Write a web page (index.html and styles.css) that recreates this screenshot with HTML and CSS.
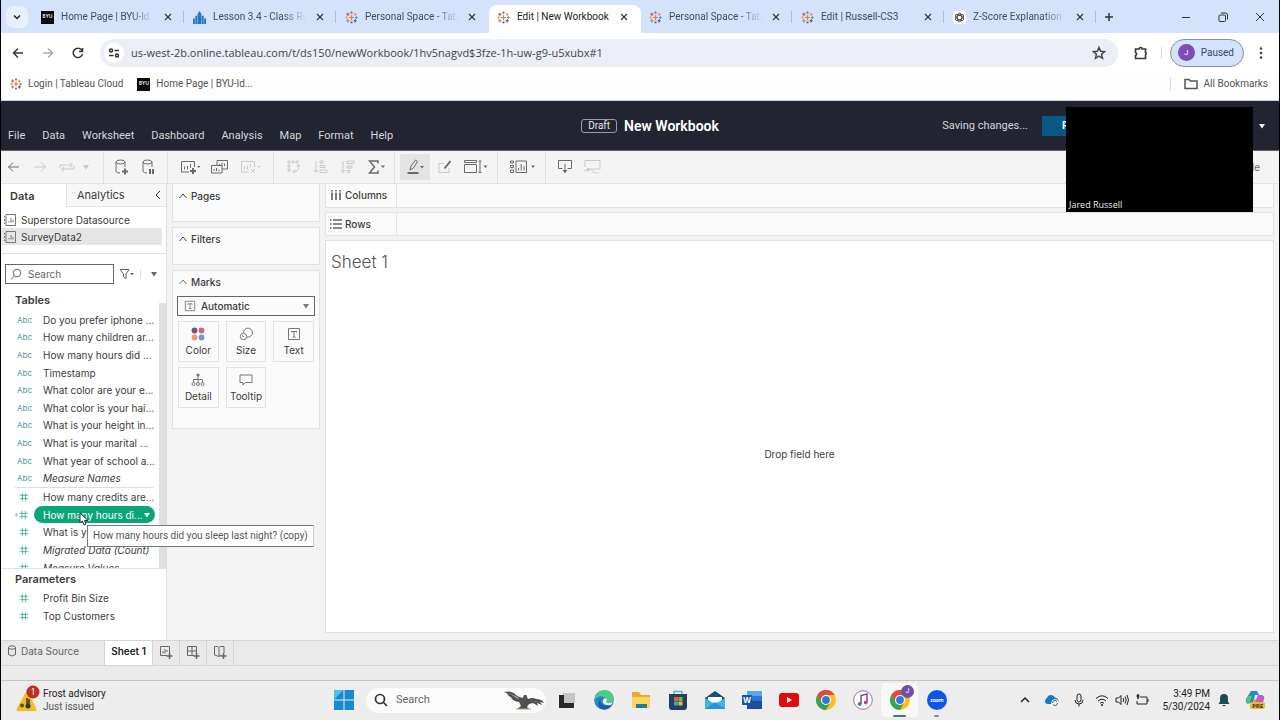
FILE: index.html
```html
<!DOCTYPE html>
<html lang="en">
<head>
<meta charset="utf-8">
<meta name="viewport" content="width=device-width, initial-scale=1">
<title>Edit | New Workbook</title>
<link rel="stylesheet" href="styles.css">
</head>
<body>
<svg class="defs" aria-hidden="true">
  <symbol id="tableau" viewBox="0 0 16 16"><g fill="none" stroke-width="1.500"><path stroke="#e8762d" d="M8 5v6M5 8h6"/><path stroke="#5b879b" d="M8 .5v3M6.500 2h3M14 6.500v3M12.500 8h3"/><path stroke="#c9575f" d="M3.500 2v4M1.500 4h4M8 12.500v3M6.500 14h3"/><path stroke="#e9a04a" d="M12.500 2v4M10.500 4h4M2 6.500v3M.5 8h3"/><path stroke="#4a5f80" d="M12.500 10v4M10.500 12h4"/><path stroke="#7199a6" d="M3.500 10v4M1.500 12h4"/></g></symbol>
  <symbol id="close" viewBox="0 0 16 16"><path d="m4 4 8 8m0-8-8 8"/></symbol>
  <symbol id="hash" viewBox="0 0 12 12"><path d="M4 1v10M8 1v10M1 4h10M1 8h10"/></symbol>
  <symbol id="up" viewBox="0 0 10 10"><path d="m1.500 7 3.500-4 3.500 4"/></symbol>
  <symbol id="caret" viewBox="0 0 8 8"><path d="M1 2h6L4 6.500z"/></symbol>
  <symbol id="source" viewBox="0 0 14 14"><path d="M3 1.500h9.500v11H3zM1.500 3v1.500M1.500 6v2M1.500 9.500V11M6 9.500V8M8 9.500V5M10 9.500V7"/></symbol>
  <symbol id="texticon" viewBox="0 0 14 14"><path d="M1.500 1.500h11v11h-11zM4.500 5.500v-1h5v1M7 4.500v5.500M5.500 10h3"/></symbol>
  <symbol id="chrome" viewBox="0 0 20 20"><circle cx="10" cy="10" r="10" fill="#fbc116"/><path fill="#df4a3c" d="M10 0A10 10 0 0 0 1.340 5l4.330 7.500L10 5h8.660A10 10 0 0 0 10 0z"/><path fill="#35a255" d="M1.340 5A10 10 0 0 0 10 20l4.330-7.500H5.670z"/><circle cx="10" cy="10" r="5" fill="#fff"/><circle cx="10" cy="10" r="3.900" fill="#3478dc"/></symbol>
</svg>

<header class="browser">
  <div class="tabstrip">
    <button class="tab-search" aria-label="Search tabs"><svg class="ln bold i10" viewBox="0 0 10 10"><path d="m2 3.500 3 3 3-3"/></svg></button>
    <nav class="tabs" aria-label="Browser tabs">
      <div class="tab"><span class="byu">BYU</span><a class="tab-title fade" href="#">Home Page | BYU-Id</a><button class="x" aria-label="Close tab"><svg class="ln bold"><use href="#close"/></svg></button></div>
      <div class="tab"><svg class="fav" viewBox="0 0 14 14"><path fill="#2476bd" d="M0 8h2v6H0zM2.500 5h2v9h-2zM5 3l2-3 2 3v11H5zM9.500 5h2v9h-2zM12 8h2v6h-2z"/></svg><a class="tab-title fade" href="#">Lesson 3.4 - Class Re</a><button class="x" aria-label="Close tab"><svg class="ln bold"><use href="#close"/></svg></button></div>
      <div class="tab before-active"><svg class="fav"><use href="#tableau"/></svg><a class="tab-title fade" href="#">Personal Space - Tab</a><button class="x" aria-label="Close tab"><svg class="ln bold"><use href="#close"/></svg></button></div>
      <div class="tab active"><svg class="fav"><use href="#tableau"/></svg><a class="tab-title" href="#">Edit | New Workbook</a><button class="x" aria-label="Close tab"><svg class="ln bold"><use href="#close"/></svg></button></div>
      <div class="tab"><svg class="fav"><use href="#tableau"/></svg><a class="tab-title fade" href="#">Personal Space - Tab</a><button class="x" aria-label="Close tab"><svg class="ln bold"><use href="#close"/></svg></button></div>
      <div class="tab"><svg class="fav"><use href="#tableau"/></svg><a class="tab-title" href="#">Edit | Russell-CS3</a><button class="x" aria-label="Close tab"><svg class="ln bold"><use href="#close"/></svg></button></div>
      <div class="tab"><svg class="fav gpt" viewBox="0 0 14 14"><g fill="none" stroke="#444"><ellipse cx="7" cy="7" rx="2.300" ry="4.800"/><ellipse cx="7" cy="7" rx="2.300" ry="4.800" transform="rotate(60 7 7)"/><ellipse cx="7" cy="7" rx="2.300" ry="4.800" transform="rotate(120 7 7)"/></g></svg><a class="tab-title fade" href="#">Z-Score Explanation</a><button class="x" aria-label="Close tab"><svg class="ln bold"><use href="#close"/></svg></button></div>
    </nav>
    <button class="new-tab" aria-label="New tab"><svg class="ln bold i10" viewBox="0 0 10 10"><path d="M5 1v8M1 5h8"/></svg></button>
    <div class="window-buttons">
      <button aria-label="Minimize"><svg class="ln i10" viewBox="0 0 10 10"><path d="M1 5.500h8"/></svg></button>
      <button aria-label="Restore"><svg class="ln i10" viewBox="0 0 10 10"><rect x="1" y="3" width="6.500" height="6.500" rx="1"/><path d="M3 1h4.500a2 2 0 0 1 2 2v4.500"/></svg></button>
      <button aria-label="Close window"><svg class="ln i10" viewBox="0 0 10 10"><path d="m1 1 8 8m0-8-8 8"/></svg></button>
    </div>
  </div>
  <div class="addressbar">
    <button class="nav-button" aria-label="Back"><svg class="ln bold i12" viewBox="0 0 12 12"><path d="M11 6H2M6 1.500 1.500 6 6 10.500"/></svg></button>
    <button class="nav-button faint" aria-label="Forward"><svg class="ln bold i12" viewBox="0 0 12 12"><path d="M1 6h9M6 1.500 10.500 6 6 10.500"/></svg></button>
    <button class="nav-button" aria-label="Reload"><svg class="ln bold i12" viewBox="0 0 12 12"><path d="M10.500 7A4.700 4.700 0 1 1 9.500 2.800L10.500 4M10.500 1v3.500H7"/></svg></button>
    <div class="omnibox">
      <button class="site-info" aria-label="Site information"><svg class="ln bold i12" viewBox="0 0 12 12"><circle cx="3" cy="3.500" r="1.500"/><path d="M6.500 3.500H11M1 8.500h4.500"/><circle cx="9" cy="8.500" r="1.500"/></svg></button>
      <input class="url" aria-label="Address" value="us-west-2b.online.tableau.com/t/ds150/newWorkbook/1hv5nagvd$3fze-1h-uw-g9-u5xubx#1">
      <button class="star" aria-label="Bookmark this page"><svg class="ln bold i14" viewBox="0 0 14 14"><path d="m7 1.500 1.600 3.700 4 .4-3 2.700.9 4L7 10.200l-3.500 2.100.9-4-3-2.700 4-.4z"/></svg></button>
    </div>
    <button class="nav-button" aria-label="Extensions"><svg class="ln heavy i14" viewBox="0 0 14 14"><path d="M1.500 3h3.700a1.500 1.500 0 0 1 3 0h3.300v3.500a1.500 1.500 0 0 1 0 2.500v3.500h-10V9.500a1.600 1.600 0 0 0 0-3z"/></svg></button>
    <span class="divider"></span>
    <button class="profile"><span class="avatar">J</span>Paused</button>
    <button class="dots" aria-label="Browser menu"><svg class="i14" viewBox="0 0 14 14"><circle cx="7" cy="2.500" r="1.300"/><circle cx="7" cy="7" r="1.300"/><circle cx="7" cy="11.500" r="1.300"/></svg></button>
  </div>
  <nav class="bookmarks" aria-label="Bookmarks">
    <a href="#"><svg class="i12"><use href="#tableau"/></svg>Login | Tableau Cloud</a>
    <a href="#"><span class="byu">BYU</span>Home Page | BYU-Id...</a>
    <a href="#" class="all-bookmarks"><svg class="ln bold i14" viewBox="0 0 14 14"><path d="M1 11.500V2.500h4l1.500 1.500H13v7.500z"/></svg>All Bookmarks</a>
  </nav>
</header>

<main class="app">
  <header class="app-header">
    <nav class="menus" aria-label="Workbook menu">
      <button>File</button><button>Data</button><button>Worksheet</button><button>Dashboard</button><button>Analysis</button><button>Map</button><button>Format</button><button>Help</button>
    </nav>
    <div class="workbook"><span class="draft">Draft</span><h1>New Workbook</h1></div>
    <div class="publish-area"><span>Saving changes...</span><button class="publish">Publish</button><button class="user-menu" aria-label="Account menu"><svg class="solid i8"><use href="#caret"/></svg></button></div>
  </header>

  <div class="toolbar" role="toolbar" aria-label="Workbook tools">
    <div class="group history">
      <button aria-label="Undo"><svg class="ln" viewBox="0 0 16 16"><path d="M13 8H2.500M7 3.500 2.500 8 7 12.500"/></svg></button>
      <button class="faint" aria-label="Redo"><svg class="ln" viewBox="0 0 16 16"><path d="M2 8h11.500M9 3.500 13.500 8 9 12.500"/></svg></button>
      <button class="faint" aria-label="Replay"><svg class="ln" viewBox="0 0 16 16"><path d="M1 9V6h12M11 4l2.500 2L11 8M15 7v3H3M5 8l-2.500 2L5 12"/></svg></button>
      <button class="slim faint" aria-label="Replay options"><svg class="solid i8"><use href="#caret"/></svg></button>
    </div>
    <div class="group data-tools">
      <button aria-label="New data source"><svg class="ln" viewBox="0 0 16 16"><ellipse cx="7.500" cy="3" rx="4.500" ry="2"/><path d="M3 3v9.500q1 1.500 4 1.500M12 3v5"/><path class="thick" d="M12 9.500v6M9 12.500h6"/></svg></button>
      <button aria-label="Pause auto updates"><svg class="ln" viewBox="0 0 16 16"><ellipse cx="7.500" cy="3" rx="4.500" ry="2"/><path d="M3 3v9.500q1 1.500 4 1.500M12 3v5"/><path class="thick" d="M10 10v5M13 10v5"/></svg></button>
    </div>
    <div class="group sheet-tools">
      <button aria-label="New worksheet"><svg class="ln i20" viewBox="0 0 20 16"><path d="M9 13H1.500V2.500h13V8M4.500 10.500v-3M7.500 10.500V7M10.500 9V5"/><path class="thick" d="M13 9v6M10 12h6"/><path class="fill" d="M17 7h3.500l-1.700 2z"/></svg></button>
      <button aria-label="Duplicate worksheet"><svg class="ln i20" viewBox="0 0 20 16"><path d="M7 6V1.500h10.500V10H12M9.500 7V5M12 7V4M14.500 7V4.500M1.500 6.500H12V14H1.500zM4 12v-2M6.500 12V9M9 12v-1.500"/></svg></button>
      <button class="faint" aria-label="Clear sheet"><svg class="ln i20" viewBox="0 0 20 16"><path d="M9 13H1.500V2.500h13V8M4.500 10.500v-3M7.500 10.500V7M10.500 8V5M11 10l4 4m0-4-4 4"/><path class="fill" d="M17 7h3.500l-1.700 2z"/></svg></button>
    </div>
    <div class="group sort-tools">
      <button class="faint" aria-label="Swap rows and columns"><svg class="ln" viewBox="0 0 16 16"><path d="M2 2h2v2H2zM6 2h2v2H6zM10 2h2v2h-2zM2 6h2v2H2zM2 10h2v2H2zM12.500 6v3q0 3.500-5 3.500M10.500 7.500l2-2 2 2M9 10.500l-2 2 2 2"/></svg></button>
      <button class="faint" aria-label="Sort ascending"><svg class="ln" viewBox="0 0 16 16"><path d="M3 2v11M1 11l2 2.500L5 11M7 2h3v2H7zM7 6.500h5v2H7zM7 11h7v2.500H7z"/></svg></button>
      <button class="faint" aria-label="Sort descending"><svg class="ln" viewBox="0 0 16 16"><path d="M3 2v11M1 11l2 2.500L5 11M7 2h7v2.500H7zM7 7h5v2H7zM7 11.500h3v2H7z"/></svg></button>
      <button aria-label="Totals"><svg class="ln i20" viewBox="0 0 20 16"><path class="mid" d="M13 4.500V2H4.500l5 6-5 6H13v-2.500"/><path class="fill" d="M16 6.500h4l-2 2.500z"/></svg></button>
    </div>
    <div class="group format-tools">
      <button class="on" aria-label="Highlight"><svg class="ln i20" viewBox="0 0 20 16"><path d="m5 11 1-4 4.500-6 2 1.500L8.500 9z"/><path class="thick" d="M2.500 14h11"/><path class="fill" d="M15 7h4l-2 2.500z"/></svg></button>
      <button aria-label="Format labels"><svg class="ln" viewBox="0 0 16 16"><path class="pale" d="M7 4.500H2v9h10V9"/><path class="thick" d="m13.500 2-6 7.500"/></svg></button>
      <button aria-label="Fit"><svg class="ln i22" viewBox="0 0 24 16"><path d="M1.500 1.500h12v2h-12zM1.500 5.500h12v8h-12zM17 2v11.500M15.500 2h3M15.500 13.500h3"/><path class="fill" d="M20.500 6.500h4l-2 2.500z"/></svg></button>
    </div>
    <div class="group cards-tools">
      <button aria-label="Show or hide cards"><svg class="ln i26" viewBox="0 0 26 16"><path d="M1.500 2h3v2h-3zM1.500 6.500h3v2h-3zM1.500 11h3v2.500h-3zM7 2h10.500v11.500H7zM9.500 11.500V9M12.200 11.500V5M15 11.500V7"/><path class="fill" d="M22 6.500h4L24 9z"/></svg></button>
    </div>
    <div class="group export-tools">
      <button aria-label="Download"><svg class="ln" viewBox="0 0 16 16"><path d="M5.500 9.500h-4v-8h13v8h-4M8 5v9"/><path class="fill" d="M5.500 11h5L8 14z"/></svg></button>
      <button class="faint" aria-label="Data guide"><svg class="ln i20" viewBox="0 0 20 16"><path d="M3 8V1.500h15V10H9M2 12.500l4-3M9 10l3 4h5"/><path class="fill" d="m4 10 5-1-3 4z"/></svg></button>
    </div>
    <button class="show-me">Show Me</button>
  </div>

  <div class="workspace">
    <aside class="data-pane">
      <div class="pane-tabs"><button class="selected">Data</button><button class="analytics">Analytics<svg class="ln i10" viewBox="0 0 10 10"><path d="M7 1 3 5l4 4"/></svg></button></div>
      <ul class="sources">
        <li><svg class="ln i14"><use href="#source"/></svg>Superstore Datasource</li>
        <li class="current"><svg class="ln i14"><use href="#source"/></svg>SurveyData2</li>
      </ul>
      <div class="search-row">
        <label class="field-search"><svg class="ln i12" viewBox="0 0 12 12"><circle cx="7" cy="5" r="3.800"/><path d="M4.500 8 1 11.500"/></svg><input aria-label="Search fields" placeholder="Search"></label>
        <button class="filter" aria-label="Filter fields"><svg class="ln" viewBox="0 0 16 12"><path d="M1 1.500h9L7 6v4.500L4.500 9V6z"/><path class="fill" d="M11 5h4l-2 2.500z"/></svg></button>
        <button class="view-menu" aria-label="View options"><svg class="solid i8"><use href="#caret"/></svg></button>
      </div>
      <div class="fields">
        <h2>Tables</h2>
        <ul class="dims">
          <li><i class="abc">Abc</i><span>Do you prefer iphone ...</span></li>
          <li><i class="abc">Abc</i><span>How many children ar...</span></li>
          <li><i class="abc">Abc</i><span>How many hours did ...</span></li>
          <li><i class="abc">Abc</i><span>Timestamp</span></li>
          <li><i class="abc">Abc</i><span>What color are your e...</span></li>
          <li><i class="abc">Abc</i><span>What color is your hai...</span></li>
          <li><i class="abc">Abc</i><span>What is your height in...</span></li>
          <li><i class="abc">Abc</i><span>What is your marital ...</span></li>
          <li><i class="abc">Abc</i><span>What year of school a...</span></li>
          <li><i class="abc">Abc</i><em>Measure Names</em></li>
        </ul>
        <ul class="measures">
          <li><svg class="ln hash"><use href="#hash"/></svg><span>How many credits are...</span></li>
          <li><svg class="ln hash calc" viewBox="0 0 17 12"><path d="M9 1v10M13 1v10M6 4h10M6 8h10M1 5h3M1 7h3"/></svg><button class="pill">How many hours di...<svg class="solid i8"><use href="#caret"/></svg></button></li>
          <li><svg class="ln hash"><use href="#hash"/></svg><span>What is yo</span></li>
          <li><svg class="ln hash"><use href="#hash"/></svg><em>Migrated Data (Count)</em></li>
          <li><svg class="ln hash"><use href="#hash"/></svg><em>Measure Values</em></li>
        </ul>
      </div>
      <div class="parameters">
        <h2>Parameters</h2>
        <ul>
          <li><svg class="ln hash"><use href="#hash"/></svg><span>Profit Bin Size</span></li>
          <li><svg class="ln hash"><use href="#hash"/></svg><span>Top Customers</span></li>
        </ul>
      </div>
      <svg class="cursor" viewBox="0 0 10 14"><path d="M1 1v10l2.500-2 1.500 4 2-1-1.500-3.500H9z" fill="#fff" stroke="#333"/></svg>
      <div class="tooltip" role="tooltip">How many hours did you sleep last night? (copy)</div>
    </aside>

    <section class="cards">
      <div class="card"><h3><svg class="ln i10"><use href="#up"/></svg>Pages</h3></div>
      <div class="card"><h3><svg class="ln i10"><use href="#up"/></svg>Filters</h3></div>
      <div class="card marks"><h3><svg class="ln i10"><use href="#up"/></svg>Marks</h3>
        <div class="mark-type"><svg class="ln i12"><use href="#texticon"/></svg><select aria-label="Mark type"><option>Automatic</option></select><svg class="solid i8"><use href="#caret"/></svg></div>
        <div class="mark-grid">
          <button><svg class="i14" viewBox="0 0 14 14"><circle cx="3.500" cy="3.500" r="2.900" fill="#7b5377"/><circle cx="10.500" cy="3.500" r="2.900" fill="#cb6a80"/><circle cx="3.500" cy="10.500" r="2.900" fill="#ea9a70"/><circle cx="10.500" cy="10.500" r="2.900" fill="#7799bd"/></svg>Color</button>
          <button><svg class="ln i14" viewBox="0 0 14 14"><path d="M4.500 6A4.500 4.500 0 1 1 8 10"/><circle cx="4.500" cy="9.500" r="3.200"/><path d="m3 8.500 2 1.500"/></svg>Size</button>
          <button><svg class="ln i14"><use href="#texticon"/></svg>Text</button>
          <button><svg class="ln i14" viewBox="0 0 14 14"><circle cx="7" cy="2" r="1.600" class="fill"/><path d="M7 3v6M2.500 9.500V6.500h9v3"/><circle cx="2.500" cy="11" r="1.500"/><circle cx="7" cy="11" r="1.500"/><circle cx="11.500" cy="11" r="1.500"/></svg>Detail</button>
          <button><svg class="ln i14" viewBox="0 0 14 14"><path d="M1 2h12v7.500H6.500L4 12V9.500H1z"/></svg>Tooltip</button>
        </div>
      </div>
    </section>

    <section class="sheet">
      <div class="shelf"><span><svg class="ln heavy i12" viewBox="0 0 12 12"><path stroke-dasharray="1.500 1 8" d="M2 1v10M6 1v10M10 1v10"/></svg>Columns</span></div>
      <div class="shelf"><span><svg class="ln heavy i12" viewBox="0 0 12 12"><path stroke-dasharray="1.500 1.500 9" d="M0 2h12M0 6h12M0 10h12"/></svg>Rows</span></div>
      <div class="canvas"><h2>Sheet 1</h2><p>Drop field here</p></div>
    </section>
  </div>

  <nav class="sheet-tabs" aria-label="Sheets">
    <button class="data-source"><svg class="ln i12" viewBox="0 0 12 12"><ellipse cx="6" cy="2.500" rx="3.500" ry="1.700"/><path d="M2.500 2.500v7q3.500 3 7 0v-7"/></svg>Data Source</button>
    <button class="sheet-one">Sheet 1</button>
    <button class="add" aria-label="New worksheet"><svg class="ln i14" viewBox="0 0 14 14"><path d="M8 10.500H1.500v-9h9V8M4 8.500V6M6 8.500V4M8 7V5"/><path class="mid" d="M10.500 8v6M7.500 11h6"/></svg></button>
    <button class="add" aria-label="New dashboard"><svg class="ln i14" viewBox="0 0 14 14"><path d="M8 10.500H1.500v-9h9V8M6 1.500v9M1.500 6h9"/><path class="mid" d="M10.500 8v6M7.500 11h6"/></svg></button>
    <button class="add" aria-label="New story"><svg class="ln i14" viewBox="0 0 14 14"><path d="M8 10 6 11.500 1.500 10V1.500H5l1 1 1-1h4V8M6 2.500v9"/><path class="mid" d="M10.500 8v6M7.500 11h6"/></svg></button>
  </nav>
  <div class="status"></div>
  <div class="video">Jared Russell</div>
</main>

<footer class="taskbar">
  <div class="weather">
    <svg class="i26" viewBox="0 0 26 26"><path d="M11 5 1.500 22q-.5 2 1 2h18q1.500 0 1-2L13 5z" fill="#f2bd22"/><path d="M12 11v7M14 12v5" stroke="#333" fill="none" stroke-width="1.500"/><circle cx="13" cy="19" r="2.500" fill="#333"/><circle cx="7" cy="18.500" r="2" fill="#5c4b16"/><circle cx="18" cy="5" r="6.500" fill="#b92f27"/><text x="18" y="8" text-anchor="middle" class="count">1</text></svg>
    <p>Frost advisory<span>Just issued</span></p>
  </div>
  <div class="apps">
    <button aria-label="Start"><svg viewBox="0 0 20 20"><path fill="#178bd1" d="M0 0h9.500v9.500H0zM10.500 0H20v9.500h-9.500zM0 10.500h9.500V20H0zM10.500 10.500H20V20h-9.500z"/><path fill="#4fc0ea" d="M0 0h9.500L0 9.500z"/></svg></button>
    <label class="task-search"><svg class="ln heavy i14" viewBox="0 0 14 14"><circle cx="6" cy="6" r="4.500"/><path d="m9.500 9.500 3.500 3.500"/></svg><input aria-label="Search Windows" placeholder="Search"><svg class="bird" viewBox="0 0 40 20"><path fill="#505050" d="M0 2q8-2 12 3 4 3 7 3l1-3q3-1 3 2l1 2q5-2 8 0 6 0 8 4l-4-1 2 3-5-2 1 3-5-3-4 1-2 3 2 2H13l4-3-2-4Q9 11 7 8l3 1Q5 7 3 4l3 1z"/><path d="M12 19h15" stroke="#b4a583"/><path fill="#999" d="m5 3 10 7-1-3zM29 11l8 2-6-2z"/></svg></label>
    <button aria-label="Task view"><svg viewBox="0 0 20 20"><path fill="#c5c5c5" d="M6 3h12v10H6z"/><path fill="#292929" d="M2 5h5v8h10v5H2z"/></svg></button>
    <button aria-label="Edge"><svg viewBox="0 0 20 20"><circle cx="10" cy="10" r="9.800" fill="#2586cb"/><path fill="#4fc987" d="M1 7Q4 0 11 0t9 8q0 5-6 5-3 0-2-2 1-3-2-4-5-2-9 2z"/><path fill="#1c59a4" d="M7 8q-2 5 2 7 4 2 9-1-3 7-10 5Q1 15 7 8z"/><path fill="#eee" d="M11 8q3 1 1 4 2 2 7 0l-2 3q-6 1-8-2-1-3 2-5z"/></svg></button>
    <button aria-label="File Explorer"><svg viewBox="0 0 20 20"><path fill="#e6a92d" d="M1 2h7l2 3h9v13H1z"/><path fill="#fbd45f" d="M1 7h18v11H1z"/><path fill="#257895" d="M5 14h11v4H5z"/></svg></button>
    <button aria-label="Microsoft Store"><svg viewBox="0 0 20 20"><path d="M6 5V1.500h8V5" fill="none" stroke="#51b7df" stroke-width="1.500"/><path fill="#243f5f" d="M1 4h18v13q0 3-3 3H4q-3 0-3-3z"/><path fill="#e65b3f" d="M6 7h4v4H6z"/><path fill="#7fb63a" d="M10.500 7h4v4h-4z"/><path fill="#38a5d9" d="M6 11.500h4v4H6z"/><path fill="#efbd2e" d="M10.500 11.500h4v4h-4z"/></svg></button>
    <button aria-label="Mail"><svg viewBox="0 0 20 20"><path fill="#154e83" d="m0 8 10-7 10 7v4H0z"/><path fill="#fff" d="M3 7h14v8H3z"/><path fill="#46b3e8" d="m0 8 10 6 10-6v11H0z"/><path fill="#2894d4" d="M0 19 10 12l10 7z"/></svg></button>
    <button aria-label="Word"><svg viewBox="0 0 20 20"><path fill="#2a79d0" d="M5 1h15v18H5z"/><path fill="#55a7e6" d="M5 1h15v5H5z"/><path fill="#1c4e9b" d="M5 11h15v8H5z"/><path fill="#1d52a5" d="M0 5h10v10H0z"/><text x="5" y="13" text-anchor="middle" class="letter">W</text></svg></button>
    <button aria-label="YouTube"><svg viewBox="0 0 20 20"><rect y="3" width="20" height="14" rx="3" fill="#e40a0d"/><path fill="#fff" d="M8 7v6l5-3z"/></svg></button>
    <button aria-label="Chrome"><svg><use href="#chrome"/></svg></button>
    <button aria-label="iTunes"><svg viewBox="0 0 20 20"><circle cx="10" cy="10" r="9.300" fill="#fff" stroke="#a36aa8"/><path d="M8 14V5.500l6-1.500v8.500" fill="none" stroke="#784d9c" stroke-width="1.500"/><circle cx="6.700" cy="14" r="2" fill="#2f84c8"/><circle cx="12.700" cy="12.500" r="2" fill="#d94370"/></svg></button>
    <button class="running" aria-label="Chrome, signed in"><svg><use href="#chrome"/></svg><span class="badge">J</span></button>
    <button class="idle" aria-label="Zoom"><svg viewBox="0 0 20 20"><circle cx="10" cy="10" r="10" fill="#0e56e8"/><text x="10" y="12" text-anchor="middle" class="zoom-word">zoom</text></svg></button>
  </div>
  <div class="tray">
    <button aria-label="Show hidden icons"><svg class="ln bold i10" viewBox="0 0 10 10"><path d="m1 7 4-4 4 4"/></svg></button>
    <button aria-label="OneDrive"><svg class="i14" viewBox="0 0 14 14"><path fill="#1479c4" d="M3 11q-3 0-3-3 0-2 2-3 1-3 4-3t4 2.500q4 1 3.500 4L12 11z"/><circle cx="10" cy="10" r="3.800" fill="#eee"/><path d="M7.500 10a2.500 2.500 0 0 1 4.500-1.500M12.500 10A2.500 2.500 0 0 1 8 11.500" fill="none" stroke="#555"/></svg></button>
    <button aria-label="Microphone"><svg class="ln i14" viewBox="0 0 14 14"><rect x="5" y="1" width="4" height="8" rx="2"/><path d="M3 7q0 4 4 4t4-4M7 11v2.500"/></svg></button>
    <button class="system" aria-label="Network, volume and battery">
      <svg class="ln i14" viewBox="0 0 14 14"><path d="M1 5.500q6-5.500 12 0M3 8q4-3.500 8 0M5 10.200q2-1.800 4 0"/><circle cx="7" cy="12" r=".7"/></svg>
      <svg class="ln i14" viewBox="0 0 14 14"><path d="M1 5h2.500L6 2.500v9L3.500 9H1zM8 5q1.500 2 0 4M10 3.500q2.500 3.500 0 7M12 2q3 5 0 10"/></svg>
      <svg class="ln i14" viewBox="0 0 14 14"><path d="M5 4h7v7H2V8M13 6v3"/><path class="mid" d="M3 1v5M1.500 3h3"/></svg>
    </button>
    <time datetime="2024-05-30T15:49">3:49 PM<br>5/30/2024</time>
    <button aria-label="Notifications"><svg class="i14" viewBox="0 0 14 14"><path fill="#204b52" d="M7 1q4 0 4 4v3.500l1.500 2.500h-11L3 8.500V5q0-4 4-4zM5 12h4q-2 2.500-4 0z"/></svg></button>
    <button class="copilot" aria-label="Copilot"><svg class="i20" viewBox="0 0 20 20"><path fill="#268bcb" d="M6 1h6l2 4h-4l-2 8H3q-3 0-2-4z"/><path fill="#5cc374" d="M3 6 1 12q0 2 3 2l3-8z"/><path fill="#c45cc8" d="M13 5h4q3 1 2 4l-2 7h-5l-2-4z"/><path fill="#f08a4c" d="m8 13 2-5 3 8H8z"/><rect x="5" y="12" width="15" height="7" rx="2" fill="#f0b929"/><text x="12.500" y="17.500" text-anchor="middle" class="pre">PRE</text></svg></button>
  </div>
</footer>
</body>
</html>
```
FILE: styles.css
```css
* { box-sizing: border-box; }
body {
  margin: 0;
  min-height: 100vh;
  display: flex;
  flex-direction: column;
  border: solid #000;
  border-width: 0 1px;
  background: #f3f3f3;
  color: #3c3c3c;
  font: 10px/14px Roboto, "Open Sans", sans-serif;
}
button, input, select { font: inherit; color: inherit; border: 0; background: none; padding: 0; min-width: 0; }
button { display: flex; align-items: center; justify-content: center; flex: none; }
a { color: inherit; text-decoration: none; }
ul, h1, h2, h3, p { margin: 0; padding: 0; list-style: none; font-size: inherit; }
svg { display: block; flex: none; width: 16px; height: 16px; overflow: visible; }
.defs { position: absolute; width: 0; height: 0; }
.ln { fill: none; stroke: currentColor; stroke-width: 1; }
.bold, .mid { stroke-width: 1.500; }
.heavy { stroke-width: 1.700; }
.thick { stroke-width: 2; }
.pale { opacity: .3; }
.fill, .solid { fill: currentColor; stroke: none; }
.i8 { width: 8px; height: 8px; }
.i10 { width: 10px; height: 10px; }
.i12 { width: 12px; height: 12px; }
.i14 { width: 14px; height: 14px; }
.i20 { width: 20px; }
.i22 { width: 24px; }
.i26 { width: 26px; }
.faint { color: #c2c2c2; }

/* Browser window */
.tabstrip { display: flex; align-items: center; height: 33px; background: #d5e2fb; padding-left: 5px; }
.tab-search { width: 22px; height: 22px; border-radius: 7px; background: #e8effd; color: #222; margin-right: 5px; }
.tabs { display: flex; flex: 0 1 1064px; min-width: 0; align-self: stretch; padding-top: 5px; }
.tab { display: flex; align-items: center; flex: 1 1 0; min-width: 0; padding: 0 9px 0 8px; margin-bottom: 4px; position: relative; color: #414b5c; }
.tab::after { content: ""; position: absolute; right: 1px; top: 6px; width: 1px; height: 12px; background: #a9bddc; }
.tab.active::after, .tab.before-active::after { display: none; }
.tab.active { background: #fff; border-radius: 8px 8px 0 0; margin-bottom: 0; padding-bottom: 4px; color: #222; }
.tab-title { flex: 1; min-width: 0; margin: 0 6px 0 7px; overflow: hidden; white-space: nowrap; }
.fade { mask-image: linear-gradient(90deg, #000 75%, transparent); }
.fav { width: 13px; height: 13px; }
.gpt { background: #fff; border-radius: 3px; }
.byu { width: 13px; height: 13px; background: #0a0a0a; color: #ddd; font: bold 5px/11px "Open Sans", sans-serif; text-align: center; flex: none; }
.x { width: 16px; height: 16px; color: #333; }
.x svg { width: 12px; height: 12px; }
.new-tab { width: 24px; height: 24px; color: #333; }
.window-buttons { display: flex; margin-left: auto; padding-right: 1px; color: #333; }
.window-buttons button { width: 37px; height: 28px; }
.addressbar { display: flex; align-items: center; height: 39px; background: #fff; padding: 0 1px 0 2px; }
.nav-button { width: 30px; height: 28px; color: #3a3a3a; }
.nav-button.faint { color: #aaa; }
.omnibox { display: flex; align-items: center; flex: 1; height: 28px; margin: 0 8px 0 7px; padding: 0 12px 0 4px; border-radius: 14px; background: #ebeef6; }
.site-info { width: 20px; height: 20px; border-radius: 10px; background: #fff; color: #333; }
.url { flex: 1; margin-left: 7px; font-size: 11px; font-family: "Open Sans", "Noto Sans", sans-serif; color: #444; }
.star { color: #444; }
.divider { width: 1px; height: 12px; margin: 0 8px 0 5px; background: #d0dcf0; }
.profile { height: 28px; padding: 0 9px 0 7px; gap: 6px; border: 1px solid #8290a8; border-radius: 14px; background: #d5e2fb; color: #354968; }
.avatar { width: 17px; height: 17px; line-height: 17px; border-radius: 9px; background: #7c4db6; color: #fff; font-size: 8px; }
.dots { width: 34px; fill: #444; }
.bookmarks { display: flex; align-items: center; gap: 14px; height: 29px; background: #fdfdfd; border-bottom: 1px solid #d0d0d0; padding: 0 11px 4px 9px; color: #555; }
.bookmarks a { display: flex; align-items: center; gap: 6px; white-space: nowrap; }
.bookmarks .all-bookmarks { margin-left: auto; padding-left: 13px; border-left: 1px solid #d0dcf0; }

/* Workbook */
.app { flex: 1; display: flex; flex-direction: column; position: relative; font-family: Inter, "Open Sans", sans-serif; }
.app-header { display: grid; grid-template-columns: 1fr auto 1fr; height: 50px; background: #222431; color: #d6d7dc; border-bottom: 1px solid #666; font: 11px/14px Roboto, sans-serif; }
.menus { display: flex; gap: 17px; padding: 20px 0 0 7px; align-items: center; }
.workbook { display: flex; align-items: center; gap: 7px; margin-left: 20px; white-space: nowrap; }
.workbook h1 { font-size: 14px; font-weight: 600; color: #fff; }
.draft { border: 1px solid #9a9ca6; border-radius: 3px; padding: 0 6px; line-height: 12px; font-size: 10px; color: #e5e5e8; }
.publish-area { display: flex; align-items: center; justify-content: flex-end; padding-right: 13px; white-space: nowrap; }
.publish { width: 210px; height: 20px; margin: 0 6px 0 14px; padding-left: 20px; justify-content: flex-start; background: #075985; color: #fff; font-weight: 700; }
.user-menu { color: #fff; }
.toolbar { display: flex; align-items: stretch; height: 33px; color: #6a6a6a; background: #f4f4f4; border-bottom: 1px solid #e3e3e3; }
.group { display: flex; align-items: center; border-right: 1px solid #e0e0e0; }
.group button { width: 27px; height: 26px; }
.group .slim { width: 12px; }
.group .faint { color: #c8c8c8; }
.history { padding-right: 11px; }
.history button:first-child { width: 25px; }
.data-tools { padding: 0 6px 0 3px; }
.sheet-tools { padding: 0 8px 0 7px; }
.sheet-tools button, .format-tools button { width: 30px; }
.sort-tools { padding: 0 6px; }
.format-tools { padding: 0 7px 0 5px; }
.format-tools .on { background: #e3e3e3; }
.cards-tools button { width: 47px; }
.export-tools { border: 0; padding-left: 5px; }
.show-me { margin-left: auto; padding-right: 19px; }

.workspace { flex: 1; display: flex; min-height: 456px; }
.data-pane { display: flex; flex-direction: column; position: relative; flex: none; width: 166px; background: #fff; border-right: 1px solid #dcdcdc; }
.pane-tabs { display: flex; height: 23px; font-size: 11px; }
.pane-tabs .selected { width: 65px; justify-content: flex-start; padding-left: 9px; font-weight: 600; }
.analytics { flex: 1; justify-content: space-between; padding: 0 3px 0 10px; background: #f7f7f7; border: solid #e3e3e3; border-width: 0 0 1px 1px; }
.sources { padding: 4px 4px 8px 0; border-bottom: 1px solid #e0e0e0; }
.sources li { display: flex; align-items: center; gap: 4px; height: 17px; padding-left: 2px; }
.sources svg { color: #777; }
.sources .current { background: #e5e5e5; }
.search-row { display: flex; align-items: center; margin: 10px 0 9px; padding-left: 4px; height: 20px; color: #666; }
.field-search { display: flex; align-items: center; flex: 1; min-width: 0; height: 20px; gap: 6px; padding: 0 4px; border: 1px solid #666; }
.field-search input { flex: 1; width: 0; }
input::placeholder { color: #666; opacity: 1; }
.filter { width: 26px; }
.view-menu { width: 26px; border-left: 1px solid #ddd; }
.fields { flex: 1 1 0; min-height: 0; overflow: hidden; position: relative; }
.fields::after { content: ""; position: absolute; right: 0; top: 10px; bottom: 0; width: 7px; background: #e0e0e0; }
.data-pane h2 { padding-left: 14px; font-size: 11px; line-height: 14px; font-weight: 600; }
.dims, .measures { display: grid; grid-template-columns: minmax(0, 1fr); grid-auto-rows: 1fr; margin-right: 13px; }
.dims { height: 177px; margin-top: 3px; padding-top: 1px; }
.measures { height: 90px; position: relative; padding-top: 1px; }
.measures::before { content: ""; position: absolute; left: 14px; right: 0; top: 0; border-top: 1px solid #ddd; }
.fields li, .parameters li { display: flex; align-items: center; padding-left: 16px; white-space: nowrap; }
.abc { width: 26px; flex: none; font-size: 8px; font-style: normal; color: #4f9d98; }
.hash { width: 12px; height: 10px; margin: 0 13px 0 1px; color: #3aae8c; }
.hash.calc { width: 17px; margin: 0 4px 0 -4px; }
.pill { flex: none; width: 121px; margin-right: -12px; padding: 0 4px 0 9px; height: 17px; justify-content: space-between; color: #fff; background: #0ba678; border-radius: 9px; }
.parameters { height: 72px; border-top: 1px solid #e0e0e0; padding-top: 3px; }
.parameters li { height: 18px; }
.parameters ul { padding-top: 3px; }
.cursor { position: absolute; left: 78px; top: 328px; width: 10px; height: 14px; }
.tooltip { position: absolute; left: 86px; top: 341px; z-index: 2; padding: 2px 5px; border: 1px solid #777; border-right-color: #ccc; background: #fff; white-space: nowrap; color: #555; font: 10px/16px Roboto, sans-serif; }

.cards { flex: none; width: 153px; padding-left: 5px; display: flex; flex-direction: column; gap: 5px; }
.card { min-height: 38px; background: #fafafa; border: 1px solid #e2e2e2; border-top-width: 0; }
.card + .card { border-top-width: 1px; }
.card h3 { display: flex; align-items: center; gap: 3px; padding: 5px 5px 3px; font-weight: 500; }
.card + .card h3 { padding-top: 4px; }
.marks { padding-bottom: 20px; }
.mark-type { display: flex; align-items: center; margin: 4px 4px 5px; padding: 0 4px 0 6px; height: 20px; gap: 5px; border: 1px solid #666; }
.mark-type select { flex: 1; appearance: none; font-weight: 500; }
.marks svg { color: #777; }
.mark-grid { display: grid; grid-template-columns: repeat(3, 1fr); gap: 5px 7px; padding: 0 5px; }
.mark-grid button { flex-direction: column; gap: 2px; height: 41px; border: 1px solid #e2e2e2; }
.sheet { flex: 1; min-width: 0; display: flex; flex-direction: column; margin: 0 5px 7px 5px; }
.shelf { height: 24px; margin-bottom: 4px; background: #fafafa; border: 1px solid #e2e2e2; }
.shelf:first-child { border-top: 0; }
.shelf span { display: flex; align-items: center; gap: 3px; width: 71px; height: 100%; padding: 0 0 1px 4px; border-right: 1px solid #e2e2e2; font-weight: 500; }
.shelf svg { color: #666; }
.canvas { flex: 1; display: flex; flex-direction: column; background: #fff; border: 1px solid #e0e0e0; }
.canvas h2 { padding: 9px 5px; font-size: 17px; line-height: 24px; font-weight: 300; color: #555; }
.canvas p { margin: auto; padding-bottom: 8px; }
.sheet-tabs { display: flex; height: 26px; background: #e9e9e9; border: solid #d4d4d4; border-width: 1px 0; color: #666; }
.sheet-tabs button { border-right: 1px solid #d4d4d4; padding-bottom: 4px; }
.sheet-tabs .data-source { width: 104px; padding-left: 5px; gap: 3px; justify-content: flex-start; }
.sheet-tabs .sheet-one { width: 48px; background: #fff; color: #222; font-weight: 600; }
.sheet-tabs .add { width: 27px; padding-bottom: 2px; }
.status { height: 14px; background: #ebebeb; }
.video { position: absolute; right: 26px; top: 6px; width: 187px; height: 105px; display: flex; align-items: flex-end; padding: 0 3px; background: #000; color: #eee; font: 9px/14px "Open Sans", sans-serif; }

/* Windows taskbar */
.taskbar { display: grid; grid-template-columns: 1fr auto 1fr; height: 40px; border-top: 1px solid #c4c4c4; background: #ededed; }
.weather { display: flex; align-items: center; gap: 2px; padding: 0 0 1px 14px; }
.weather svg { height: 26px; }
.weather p { line-height: 13px; color: #222; }
.weather span { display: block; color: #555; }
.count { font: 9px "Open Sans", sans-serif; fill: #fff; }
.apps { display: flex; align-items: center; padding-bottom: 1px; }
.apps button { width: 37px; height: 34px; position: relative; }
.apps button svg { width: 20px; height: 20px; }
.task-search { display: flex; align-items: center; width: 180px; height: 25px; margin: 0 2px 0 4px; padding: 0 2px 0 8px; gap: 8px; border-radius: 13px; background: #fbfbfb; color: #333; font-size: 11px; }
.task-search input { flex: 1; width: 0; }
.bird { width: 40px; height: 20px; }
.letter { font: bold 8px "Open Sans", sans-serif; fill: #fff; }
.zoom-word { font: bold 5px "Open Sans", sans-serif; fill: #fff; }
.badge { position: absolute; right: 4px; top: 2px; width: 13px; height: 13px; border-radius: 7px; background: #724eaa; color: #fff; font-size: 7px; line-height: 13px; }
.running { background: #f8f8f8; border-radius: 4px; }
.running::after, .idle::after { content: ""; position: absolute; bottom: 0; width: 13px; height: 2px; border-radius: 1px; background: #357e86; }
.idle::after { width: 5px; background: #888; }
.tray { display: flex; align-items: center; justify-content: flex-end; padding: 0 14px 1px 0; color: #222; }
.tray button { width: 27px; height: 30px; }
.tray .system { width: 60px; gap: 6px; }
.tray time { width: 58px; text-align: right; line-height: 13px; }
.tray .copilot { width: 28px; justify-content: flex-end; }
.copilot svg { height: 20px; }
.pre { font: bold 6px "Open Sans", sans-serif; fill: #333; }
```
